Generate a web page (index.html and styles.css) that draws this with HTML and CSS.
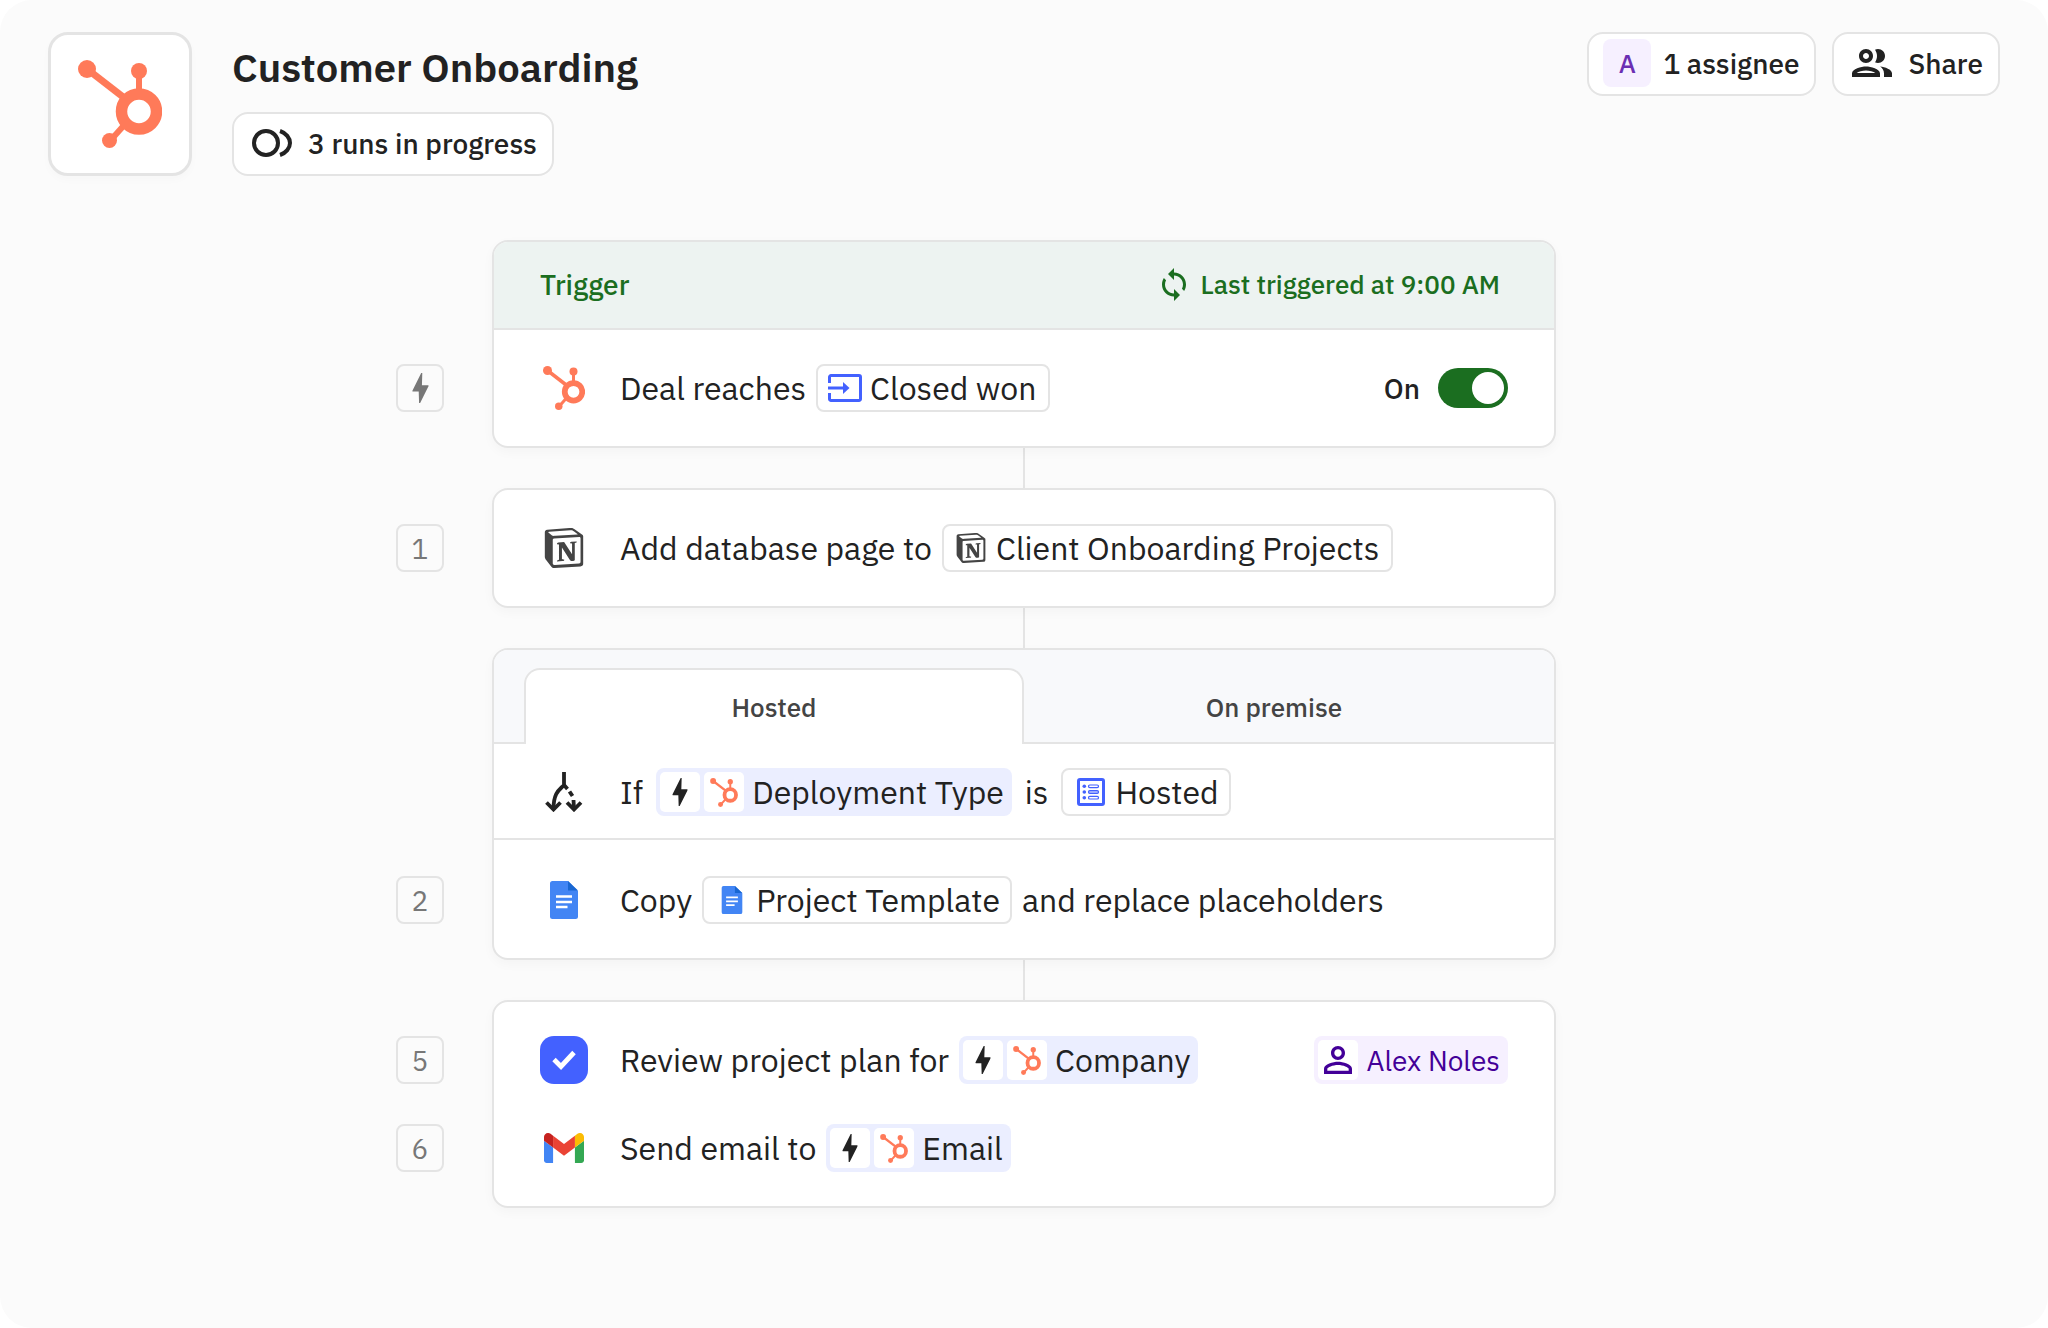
FILE: index.html
```html
<!DOCTYPE html>
<html lang="en">
<head>
    <meta charset="UTF-8">
    <meta name="viewport" content="width=device-width, initial-scale=1.0">
    <title>Customer Onboarding</title>
    <link rel="stylesheet" href="styles.css">
</head>
<body>
    <!-- Shared icons -->
    <svg class="sprite" aria-hidden="true">
        <symbol id="hubspot" viewBox="0 0 84 88">
            <g fill="none" stroke="#ff7a59">
                <path d="M9 9l40 31" stroke-width="7"/>
                <path d="M61 11v24" stroke-width="6"/>
                <path d="M48 63L32 81" stroke-width="6"/>
                <circle cx="61" cy="51.5" r="17.5" stroke-width="11.5"/>
            </g>
            <g fill="#ff7a59">
                <circle cx="9" cy="9" r="9"/>
                <circle cx="61" cy="11" r="8"/>
                <circle cx="31.5" cy="80.5" r="7.5"/>
            </g>
        </symbol>
        <symbol id="bolt" viewBox="0 0 46 84">
            <path fill="currentColor" d="M25 0h3l-1 34h17q3 0 1 4L22 84h-3l-1-32H2q-3 0-1-4z"/>
        </symbol>
        <symbol id="notion" viewBox="0 0 24 24">
            <path fill="#444" d="M4.459 4.208c.746.606 1.026.56 2.428.466l13.215-.793c.28 0 .047-.28-.046-.326L17.86 1.968c-.42-.326-.981-.7-2.055-.607L3.01 2.295c-.466.046-.56.28-.374.466zm.793 3.08v13.904c0 .747.373 1.027 1.214.98l14.523-.84c.841-.046.935-.56.935-1.167V6.354c0-.606-.233-.933-.748-.887l-15.177.887c-.56.047-.747.327-.747.933zm14.337.745c.093.42 0 .84-.42.888l-.7.14v10.264c-.608.327-1.168.514-1.635.514-.748 0-.935-.234-1.495-.933l-4.577-7.186v6.952L12.21 19s0 .84-1.168.84l-3.222.186c-.093-.186 0-.653.327-.746l.84-.233V9.854L7.822 9.76c-.094-.42.14-1.026.793-1.073l3.456-.233 4.764 7.279v-6.44l-1.215-.139c-.093-.514.28-.887.747-.933zM1.936 1.035l13.31-.98c1.634-.14 2.055-.047 3.082.7l4.249 2.986c.7.513.934.653.934 1.213v16.378c0 1.026-.373 1.634-1.68 1.726l-15.458.934c-.98.047-1.448-.093-1.962-.747l-3.129-4.06c-.56-.747-.793-1.306-.793-1.96V2.667c0-.839.374-1.54 1.447-1.632z"/>
        </symbol>
        <symbol id="doc" viewBox="0 0 28 38">
            <path fill="#4285f4" d="M2.5 0H18l10 10v25.500a2.500 2.500 0 0 1-2.500 2.500h-23A2.500 2.500 0 0 1 0 35.500v-33A2.500 2.500 0 0 1 2.500 0z"/>
            <path fill="#1967d2" d="M18 0l10 9.500H18z"/>
            <path stroke="#fff" stroke-width="2.400" d="M6 15.500h16M6 21h16M6 26h11.500"/>
        </symbol>
    </svg>

    <div class="page">
        <header class="header">
            <div class="app-logo">
                <svg width="84" height="88" role="img" aria-label="HubSpot"><use href="#hubspot"/></svg>
            </div>
            <div class="heading">
                <h1>Customer Onboarding</h1>
                <button class="pill">
                    <svg class="runs-icon" viewBox="0 0 40 28" fill="none" stroke="currentColor" stroke-width="4">
                        <circle cx="14" cy="14" r="12"/>
                        <path d="M28 2c6 2 10 7 10 12s-4 10-10 12"/>
                    </svg>
                    3 runs in progress
                </button>
            </div>
            <div class="actions">
                <button class="pill pill-assignee"><span class="avatar">A</span>1 assignee</button>
                <button class="pill">
                    <svg width="40" height="28" viewBox="2 5 20 14" fill="currentColor">
                        <path d="M9 13.750c-2.340 0-7 1.170-7 3.500V19h14v-1.750c0-2.330-4.660-3.500-7-3.500zM4.340 17c.84-.58 2.870-1.250 4.660-1.250s3.820.67 4.660 1.250H4.340zM9 12c1.930 0 3.500-1.570 3.500-3.500S10.930 5 9 5 5.500 6.570 5.500 8.500 7.070 12 9 12zm0-5c.83 0 1.500.67 1.500 1.500S9.830 10 9 10s-1.500-.67-1.500-1.500S8.170 7 9 7zm7.040 6.810c1.160.84 1.960 1.960 1.960 3.440V19h4v-1.750c0-2.020-3.500-3.170-5.960-3.440zM15 12c1.930 0 3.500-1.570 3.500-3.500S16.930 5 15 5c-.54 0-1.040.13-1.500.35.63.89 1 1.980 1 3.150s-.37 2.260-1 3.150c.46.22.96.35 1.500.35z"/>
                    </svg>
                    Share
                </button>
            </div>
        </header>

        <main class="flow">
            <section class="step">
                <div class="gutter">
                    <span class="badge"><svg width="17" height="30"><use href="#bolt"/></svg></span>
                </div>
                <div class="card">
                    <div class="trigger-bar">
                        <h2>Trigger</h2>
                        <p class="last-run">
                            <svg width="24" height="33" viewBox="4 1 16 22" fill="currentColor">
                                <path d="M12 4V1L8 5l4 4V6c3.310 0 6 2.690 6 6 0 1.010-.25 1.970-.7 2.800l1.460 1.460C19.540 15.030 20 13.570 20 12c0-4.420-3.580-8-8-8zm0 14c-3.310 0-6-2.690-6-6 0-1.010.25-1.970.7-2.800L5.240 7.740C4.460 8.970 4 10.430 4 12c0 4.420 3.580 8 8 8v3l4-4-4-4v3z"/>
                            </svg>
                            Last triggered at 9:00 AM
                        </p>
                    </div>
                    <div class="rows">
                        <div class="row">
                            <div class="row-icon"><svg width="42" height="44"><use href="#hubspot"/></svg></div>
                            <p class="sentence">
                                Deal reaches
                                <span class="tag">
                                    <svg width="34" height="28" viewBox="0 0 34 28" fill="none" stroke="#4361ff" stroke-width="3">
                                        <path d="M1.500 9V3a1.500 1.500 0 0 1 1.500-1.500h28A1.500 1.500 0 0 1 32.500 3v22a1.500 1.500 0 0 1-1.500 1.500H3A1.500 1.500 0 0 1 1.500 25v-6"/>
                                        <path d="M0 14h17"/>
                                        <path d="M15 8l6.500 6-6.500 6z" fill="#4361ff" stroke="none"/>
                                    </svg>
                                    Closed won
                                </span>
                            </p>
                            <label class="switch">On<input type="checkbox" checked></label>
                        </div>
                    </div>
                </div>
            </section>

            <div class="connector"></div>

            <section class="step">
                <div class="gutter"><span class="badge">1</span></div>
                <div class="card">
                    <div class="rows">
                        <div class="row">
                            <div class="row-icon"><svg width="40" height="40"><use href="#notion"/></svg></div>
                            <p class="sentence">
                                Add database page to
                                <span class="tag"><svg width="34" height="30"><use href="#notion"/></svg>Client Onboarding Projects</span>
                            </p>
                        </div>
                    </div>
                </div>
            </section>

            <div class="connector"></div>

            <section class="step">
                <div class="gutter"><span class="badge">2</span></div>
                <div class="card">
                    <div class="tabs" role="tablist">
                        <button class="tab active" role="tab" aria-selected="true">Hosted</button>
                        <button class="tab" role="tab" aria-selected="false">On premise</button>
                    </div>
                    <div class="rows rows-condition">
                        <div class="row">
                            <div class="row-icon">
                                <svg width="38" height="40" viewBox="0 0 38 40" fill="none" stroke="#222" stroke-width="3.800">
                                    <path d="M19 0v13C15 17.500 8.500 20 8.500 37"/>
                                    <path d="M19 13l3.500 4M24.500 19.500l3 4.500M28.500 28l.5 9"/>
                                    <path d="M1.500 30.500l7 7 7-7M22 30.500l7 7 7-7"/>
                                </svg>
                            </div>
                            <p class="sentence">
                                If
                                <span class="tag tag-field">
                                    <span class="chip"><svg width="16" height="28"><use href="#bolt"/></svg></span>
                                    <span class="chip"><svg width="28" height="29"><use href="#hubspot"/></svg></span>
                                    Deployment Type
                                </span>
                                is
                                <span class="tag tag-wide">
                                    <svg width="28" height="28" viewBox="0 0 28 28" fill="none" stroke="#4361ff">
                                        <rect x="1.500" y="1.500" width="25" height="25" rx="1.500" stroke-width="3"/>
                                        <g stroke-width="1.200">
                                            <rect x="11.500" y="7" width="10" height="2.600" rx="1.300"/>
                                            <rect x="11.500" y="12.700" width="10" height="2.600" rx="1.300" fill="#b8c3ff"/>
                                            <rect x="11.500" y="18.400" width="10" height="2.600" rx="1.300"/>
                                        </g>
                                        <g fill="#4361ff" stroke="none">
                                            <circle cx="7.300" cy="8.300" r="1.800"/>
                                            <circle cx="7.300" cy="14" r="1.800"/>
                                            <circle cx="7.300" cy="19.700" r="1.800"/>
                                        </g>
                                    </svg>
                                    Hosted
                                </span>
                            </p>
                        </div>
                    </div>
                    <div class="rows">
                        <div class="row">
                            <div class="row-icon"><svg width="28" height="38"><use href="#doc"/></svg></div>
                            <p class="sentence">
                                Copy
                                <span class="tag tag-wide"><svg width="28" height="28"><use href="#doc"/></svg>Project Template</span>
                                and replace placeholders
                            </p>
                        </div>
                    </div>
                </div>
            </section>

            <div class="connector"></div>

            <section class="step">
                <div class="gutter">
                    <span class="badge">5</span>
                    <span class="badge">6</span>
                </div>
                <div class="card">
                    <div class="rows">
                        <div class="row">
                            <div class="row-icon task">
                                <svg width="24" height="20" viewBox="0 0 24 20" fill="none" stroke="#fff" stroke-width="4.800"><path d="M2 9.500l7 7L22 2.500"/></svg>
                            </div>
                            <p class="sentence">
                                Review project plan for
                                <span class="tag tag-field">
                                    <span class="chip"><svg width="16" height="28"><use href="#bolt"/></svg></span>
                                    <span class="chip"><svg width="28" height="29"><use href="#hubspot"/></svg></span>
                                    Company
                                </span>
                            </p>
                            <span class="person">
                                <span class="chip">
                                    <svg width="28" height="28" viewBox="4 4 16 16" fill="currentColor">
                                        <path d="M12 5.900c1.160 0 2.100.94 2.100 2.100s-.94 2.100-2.100 2.100S9.900 9.160 9.900 8s.94-2.100 2.100-2.100m0 9c2.970 0 6.100 1.460 6.100 2.100v1.100H5.900V17c0-.64 3.130-2.100 6.100-2.100M12 4C9.790 4 8 5.790 8 8s1.790 4 4 4 4-1.790 4-4-1.790-4-4-4zm0 9c-2.670 0-8 1.340-8 4v3h16v-3c0-2.660-5.330-4-8-4z"/>
                                    </svg>
                                </span>
                                Alex Noles
                            </span>
                        </div>
                        <div class="row">
                            <div class="row-icon">
                                <svg width="40" height="30" viewBox="52 42 88 66">
                                    <path fill="#4285f4" d="M58 108h14V74L52 59v43c0 3.320 2.690 6 6 6"/>
                                    <path fill="#34a853" d="M120 108h14c3.320 0 6-2.690 6-6V59l-20 15"/>
                                    <path fill="#fbbc04" d="M120 48v26l20-15v-8c0-7.420-8.470-11.650-14.400-7.200"/>
                                    <path fill="#ea4335" d="M72 74V48l24 18 24-18v26L96 92"/>
                                    <path fill="#c5221f" d="M52 51v8l20 15V48l-5.600-4.200c-5.940-4.450-14.400-.22-14.400 7.200"/>
                                </svg>
                            </div>
                            <p class="sentence">
                                Send email to
                                <span class="tag tag-field">
                                    <span class="chip"><svg width="16" height="28"><use href="#bolt"/></svg></span>
                                    <span class="chip"><svg width="28" height="29"><use href="#hubspot"/></svg></span>
                                    Email
                                </span>
                            </p>
                        </div>
                    </div>
                </div>
            </section>
        </main>
    </div>
</body>
</html>
```
FILE: styles.css
```css
* {
    box-sizing: border-box;
}

body {
    margin: 0;
    background: #fff;
    color: #222;
    font-family: "IBM Plex Sans", Roboto, sans-serif;
    font-size: 28px;
}

h1, h2, p {
    margin: 0;
}

button {
    font: inherit;
    color: inherit;
    cursor: pointer;
}

svg {
    display: block;
    flex-shrink: 0;
}

.sprite {
    display: none;
}

.page {
    min-height: 100vh;
    padding: 32px 48px;
    background: #fbfbfb;
    border-radius: 32px;
}

/* Header */
.header {
    display: flex;
    align-items: flex-start;
    margin-bottom: 64px;
}

.app-logo {
    display: flex;
    align-items: center;
    justify-content: center;
    width: 144px;
    height: 144px;
    margin-right: 40px;
    background: #fff;
    border: 3px solid #e4e4e4;
    border-radius: 20px;
    box-shadow: 0 4px 8px rgba(0, 0, 0, 0.02);
}

.heading {
    display: flex;
    flex-direction: column;
    align-items: flex-start;
    gap: 10px;
}

h1 {
    font-size: 40px;
    font-weight: 600;
    line-height: 70px;
}

.pill {
    display: flex;
    align-items: center;
    gap: 16px;
    height: 64px;
    padding: 0 15px 2px 18px;
    background: #fff;
    border: 2px solid #e4e4e4;
    border-radius: 16px;
    font-weight: 500;
}

.runs-icon {
    width: 40px;
    height: 28px;
}

.pill-assignee {
    gap: 12px;
    padding-left: 14px;
}

.avatar {
    width: 48px;
    border-radius: 8px;
    background: #f6f0ff;
    color: #6b2fb3;
    font-size: 26px;
    line-height: 48px;
    text-align: center;
}

.actions {
    display: flex;
    gap: 16px;
    margin-left: auto;
}

/* Workflow steps */
.step {
    display: grid;
    grid-template-columns: 48px minmax(0, 1064px) 48px;
    gap: 48px;
    justify-content: center;
}

.gutter {
    display: flex;
    flex-direction: column;
    justify-content: flex-end;
    gap: 40px;
    padding-bottom: 36px;
}

.badge {
    display: flex;
    align-items: center;
    justify-content: center;
    height: 48px;
    border: 2px solid #e4e4e4;
    border-radius: 8px;
    color: #777;
}

.card {
    overflow: hidden;
    background: #fff;
    border: 2px solid #e4e4e4;
    border-radius: 16px;
    box-shadow: 0 4px 12px rgba(0, 0, 0, 0.03);
}

.connector {
    width: 2px;
    height: 40px;
    margin: 0 auto;
    background: #e4e4e4;
}

.rows {
    display: flex;
    flex-direction: column;
    gap: 40px;
    padding: 34px 46px;
}

.rows-condition {
    padding: 24px 46px 22px;
    border-bottom: 2px solid #e4e4e4;
}

.rows-condition + .rows {
    padding-top: 36px;
}

.row {
    display: flex;
    align-items: center;
    height: 48px;
}

.row-icon {
    display: flex;
    align-items: center;
    justify-content: center;
    width: 48px;
    height: 48px;
    margin-right: 32px;
}

.task {
    background: #4361ff;
    border-radius: 14px;
}

.sentence {
    display: flex;
    flex: 1;
    align-items: center;
    gap: 10px;
    font-size: 32px;
    white-space: nowrap;
}

.rows-condition .sentence {
    gap: 13px;
}

.tag {
    display: flex;
    align-items: center;
    gap: 8px;
    height: 48px;
    padding: 0 12px 0 10px;
    border: 2px solid #e4e4e4;
    border-radius: 8px;
}

.tag-wide {
    gap: 10px;
    padding: 0 10px 0 14px;
}

.tag-field,
.person {
    gap: 4px;
    padding: 0 8px 0 4px;
    border: 0;
    border-radius: 8px;
    background: #ebeeff;
}

.chip {
    display: flex;
    align-items: center;
    justify-content: center;
    width: 40px;
    height: 40px;
    background: #fff;
    border-radius: 5px;
}

.chip:last-of-type {
    margin-right: 4px;
}

.person {
    display: flex;
    align-items: center;
    height: 48px;
    background: #f6f0ff;
    color: #430098;
}

/* Trigger */
.trigger-bar {
    display: flex;
    align-items: center;
    justify-content: space-between;
    height: 88px;
    padding: 0 54px 2px 46px;
    background: #edf3f1;
    border-bottom: 2px solid #e4e4e4;
    color: #1b6e20;
}

h2 {
    font-size: 28px;
    font-weight: 500;
}

.last-run {
    display: flex;
    align-items: center;
    gap: 14px;
    font-size: 26px;
    font-weight: 500;
}

.switch {
    display: flex;
    align-items: center;
    gap: 18px;
    font-size: 28px;
    font-weight: 500;
    cursor: pointer;
}

.switch input {
    appearance: none;
    width: 70px;
    height: 40px;
    margin: 0;
    padding: 4px;
    background: #999;
    border-radius: 20px;
    cursor: pointer;
}

.switch input::before {
    content: "";
    display: block;
    width: 32px;
    height: 32px;
    background: #fff;
    border-radius: 50%;
}

.switch input:checked {
    background: #1b6e20;
}

.switch input:checked::before {
    margin-left: auto;
}

/* Branch tabs */
.tabs {
    display: flex;
    padding: 18px 30px 0;
    background: #f8f9fb;
    border-bottom: 2px solid #e4e4e4;
}

.tab {
    flex: 1;
    height: 76px;
    margin-bottom: -2px;
    padding-bottom: 2px;
    background: none;
    border: 2px solid transparent;
    border-bottom: 0;
    border-radius: 16px 16px 0 0;
    color: #444;
    font-size: 26px;
    font-weight: 500;
}

.tab.active {
    background: #fff;
    border-color: #e4e4e4;
}
```
